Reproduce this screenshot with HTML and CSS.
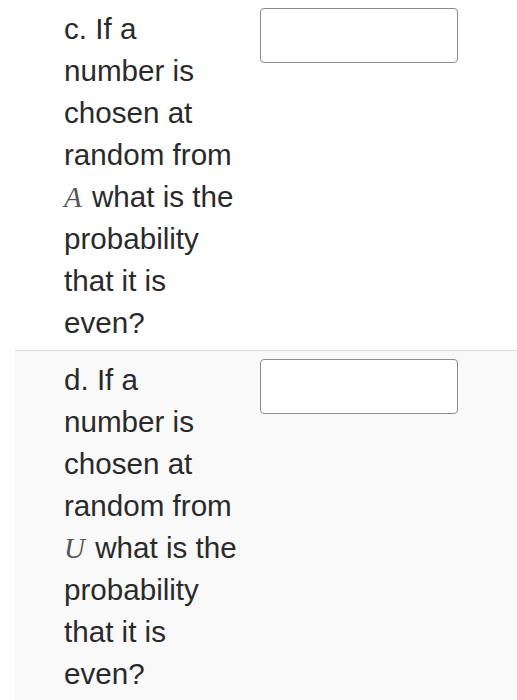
FILE: index.html
```html
<!DOCTYPE html>
<html>
<head>
<meta charset="utf-8">
<link rel="stylesheet" href="styles.css">
</head>
<body>
<div class="list">
  <div class="row">
    <div class="question">c. If a number is chosen at random from <span class="math">A</span> what is the probability that it is even?</div>
    <div class="answer"><input class="field" type="text"></div>
  </div>
  <div class="row alt">
    <div class="question">d. If a number is chosen at random from <span class="math">U</span> what is the probability that it is even?</div>
    <div class="answer"><input class="field" type="text"></div>
  </div>
</div>
</body>
</html>
```
FILE: styles.css
```css
html, body {
  margin: 0;
  padding: 0;
  background: #ffffff;
}
.list {
  margin-left: 15px;
}
.row {
  display: flex;
  align-items: flex-start;
  padding: 8px 0 6px 49px;
}
.row + .row {
  border-top: 1px solid #dcdcdc;
}
.alt {
  background: #f9f9f9;
}
.question {
  width: 176px;
  font-family: "Liberation Sans", Arial, sans-serif;
  font-size: 29.6px;
  line-height: 42px;
  color: #2a2a2a;
}
.math {
  font-family: "Liberation Serif", "Times New Roman", serif;
  font-style: italic;
  font-size: 29px;
  color: #555555;
  padding-right: 2px;
}
.answer {
  margin-left: 20px;
}
.field {
  display: block;
  box-sizing: border-box;
  width: 198px;
  height: 55px;
  margin: 0;
  border: 1.5px solid #8c8c8c;
  border-radius: 4px;
  background: #ffffff;
  padding: 0;
}
```
